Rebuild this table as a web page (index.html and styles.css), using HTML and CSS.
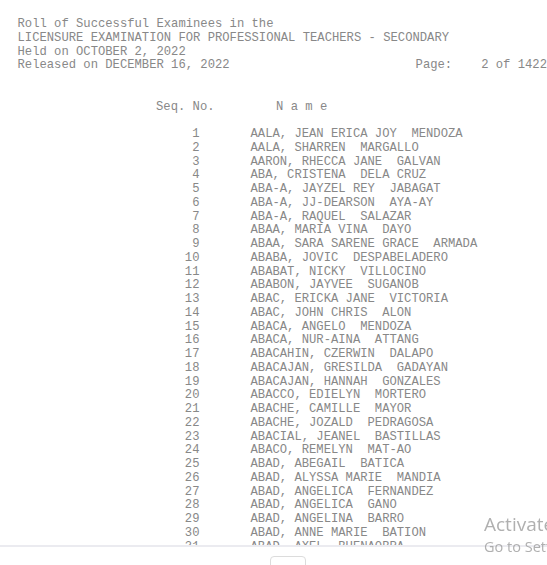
FILE: index.html
```html
<!DOCTYPE html>
<html>
<head>
<meta charset="utf-8">
<link rel="stylesheet" href="styles.css">
</head>
<body>
<main class="page">
  <div class="head">
    <div class="line"><span class="t">Roll of Successful Examinees in the</span></div>
    <div class="line"><span class="t">LICENSURE EXAMINATION FOR PROFESSIONAL TEACHERS - SECONDARY</span></div>
    <div class="line"><span class="t">Held on OCTOBER 2, 2022</span></div>
    <div class="line"><span class="t rel">Released on DECEMBER 16, 2022</span><span class="t pg">Page:</span><span class="t pgn">2 of 1422</span></div>
  </div>
  <div class="table">
    <div class="row th"><span class="t seq">Seq. No.</span><span class="t nm">N a m e</span></div>
    <div class="rows">
      <div class="row"><span class="t num">1</span><span class="t name">AALA, JEAN ERICA JOY  MENDOZA</span></div>
      <div class="row"><span class="t num">2</span><span class="t name">AALA, SHARREN  MARGALLO</span></div>
      <div class="row"><span class="t num">3</span><span class="t name">AARON, RHECCA JANE  GALVAN</span></div>
      <div class="row"><span class="t num">4</span><span class="t name">ABA, CRISTENA  DELA CRUZ</span></div>
      <div class="row"><span class="t num">5</span><span class="t name">ABA-A, JAYZEL REY  JABAGAT</span></div>
      <div class="row"><span class="t num">6</span><span class="t name">ABA-A, JJ-DEARSON  AYA-AY</span></div>
      <div class="row"><span class="t num">7</span><span class="t name">ABA-A, RAQUEL  SALAZAR</span></div>
      <div class="row"><span class="t num">8</span><span class="t name">ABAA, MARIA VINA  DAYO</span></div>
      <div class="row"><span class="t num">9</span><span class="t name">ABAA, SARA SARENE GRACE  ARMADA</span></div>
      <div class="row"><span class="t num">10</span><span class="t name">ABABA, JOVIC  DESPABELADERO</span></div>
      <div class="row"><span class="t num">11</span><span class="t name">ABABAT, NICKY  VILLOCINO</span></div>
      <div class="row"><span class="t num">12</span><span class="t name">ABABON, JAYVEE  SUGANOB</span></div>
      <div class="row"><span class="t num">13</span><span class="t name">ABAC, ERICKA JANE  VICTORIA</span></div>
      <div class="row"><span class="t num">14</span><span class="t name">ABAC, JOHN CHRIS  ALON</span></div>
      <div class="row"><span class="t num">15</span><span class="t name">ABACA, ANGELO  MENDOZA</span></div>
      <div class="row"><span class="t num">16</span><span class="t name">ABACA, NUR-AINA  ATTANG</span></div>
      <div class="row"><span class="t num">17</span><span class="t name">ABACAHIN, CZERWIN  DALAPO</span></div>
      <div class="row"><span class="t num">18</span><span class="t name">ABACAJAN, GRESILDA  GADAYAN</span></div>
      <div class="row"><span class="t num">19</span><span class="t name">ABACAJAN, HANNAH  GONZALES</span></div>
      <div class="row"><span class="t num">20</span><span class="t name">ABACCO, EDIELYN  MORTERO</span></div>
      <div class="row"><span class="t num">21</span><span class="t name">ABACHE, CAMILLE  MAYOR</span></div>
      <div class="row"><span class="t num">22</span><span class="t name">ABACHE, JOZALD  PEDRAGOSA</span></div>
      <div class="row"><span class="t num">23</span><span class="t name">ABACIAL, JEANEL  BASTILLAS</span></div>
      <div class="row"><span class="t num">24</span><span class="t name">ABACO, REMELYN  MAT-AO</span></div>
      <div class="row"><span class="t num">25</span><span class="t name">ABAD, ABEGAIL  BATICA</span></div>
      <div class="row"><span class="t num">26</span><span class="t name">ABAD, ALYSSA MARIE  MANDIA</span></div>
      <div class="row"><span class="t num">27</span><span class="t name">ABAD, ANGELICA  FERNANDEZ</span></div>
      <div class="row"><span class="t num">28</span><span class="t name">ABAD, ANGELICA  GANO</span></div>
      <div class="row"><span class="t num">29</span><span class="t name">ABAD, ANGELINA  BARRO</span></div>
      <div class="row"><span class="t num">30</span><span class="t name">ABAD, ANNE MARIE  BATION</span></div>
      <div class="row"><span class="t num">31</span><span class="t name">ABAD, AXEL  BUENAOBRA</span></div>
    </div>
  </div>
</main>
<div class="toolbar"><div class="tbtn"></div></div>
<div class="watermark">
  <div class="wm1">Activate Windows</div>
  <div class="wm2">Go to Settings to activate Windows.</div>
</div>
</body>
</html>
```
FILE: styles.css
```css
html, body {
  margin: 0;
  padding: 0;
  overflow: hidden;
  background: #ffffff;
}
.page {
  padding: 18px 0 0 17.5px;
  font-family: "Liberation Mono", "Courier New", monospace;
  font-size: 12.2px;
  line-height: 13.76px;
  color: #888888;
}
.t {
  white-space: pre;
}
.line {
  display: flex;
  height: 13.76px;
}
.rel {
  width: 406.5px;
}
.pg {
  width: 67px;
}
.table {
  margin-top: 27.5px;
  margin-left: 138.5px;
}
.th {
  display: flex;
}
.seq {
  width: 120px;
}
.rows {
  margin-top: 13.76px;
}
.row {
  display: flex;
  height: 13.76px;
}
.num {
  width: 43.5px;
  text-align: right;
}
.name {
  margin-left: 51px;
}
.toolbar {
  position: fixed;
  left: 0;
  right: 0;
  bottom: 0;
  height: 18px;
  background: #ffffff;
  border-top: 2px solid #ebebf0;
}
.tbtn {
  margin-left: 270px;
  margin-top: 9px;
  width: 34px;
  height: 20px;
  border: 1px solid #dcdcdc;
  border-radius: 4px;
}
.watermark {
  position: fixed;
  left: 484px;
  top: 512px;
  font-family: "Open Sans", "Noto Sans", sans-serif;
  color: rgba(150, 150, 150, 0.75);
  white-space: nowrap;
}
.wm1 {
  font-size: 19px;
  line-height: 25px;
}
.wm2 {
  font-size: 14.5px;
  line-height: 20px;
}
```
